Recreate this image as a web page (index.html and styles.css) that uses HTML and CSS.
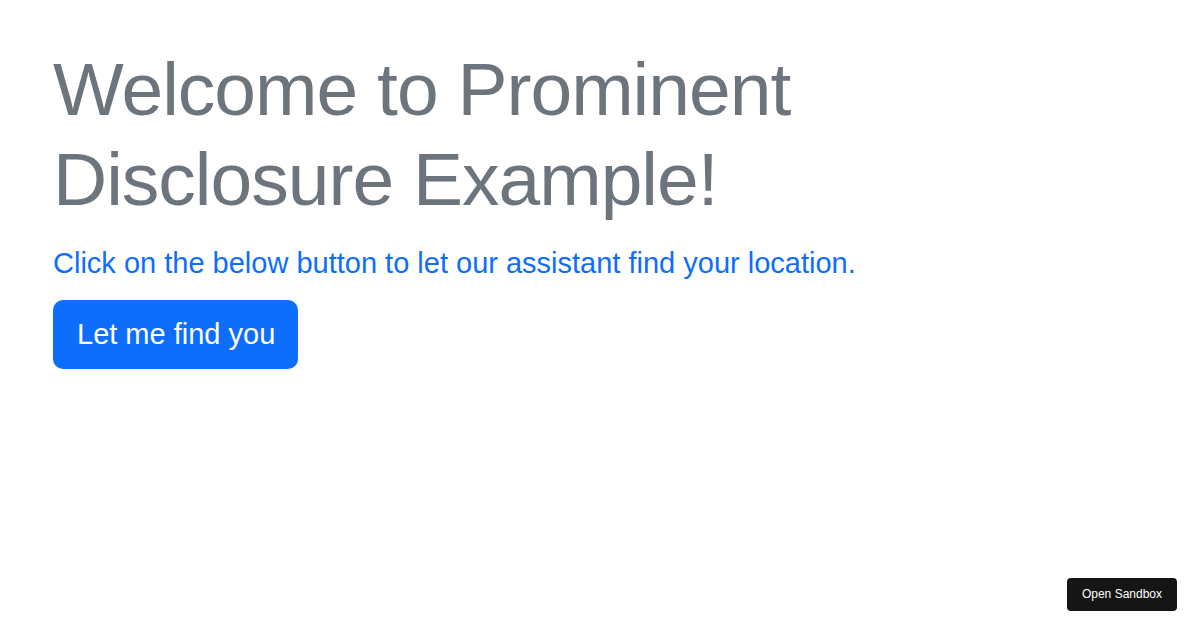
FILE: index.html
```html
<!DOCTYPE html>
<html lang="en">
<head>
    <meta charset="UTF-8">
    <meta name="viewport" content="width=device-width, initial-scale=1.0">
    <title>Prominent Disclosure Example</title>
    <link rel="stylesheet" href="styles.css">
</head>
<body>
    <main class="container">
        <h1 class="display">Welcome to Prominent Disclosure Example!</h1>
        <p class="lead">Click on the below button to let our assistant find your location.</p>
        <button class="btn-primary" id="findMe">Let me find you</button>
    </main>
    <a class="sandbox-link" href="#">Open Sandbox</a>
</body>
</html>
```

FILE: styles.css
```css
body {
    margin: 0;
    padding: 0;
    font-family: "Liberation Sans", Arial, sans-serif;
    background: #fff;
}
.container {
    padding: 44px 53px 0;
}
.display {
    max-width: 820px;
    margin: 0;
    font-size: 75px;
    font-weight: 300;
    line-height: 90px;
    letter-spacing: -1px;
    color: #6c757d;
}
.lead {
    margin: 21px 0 19px;
    font-size: 29px;
    line-height: 36px;
    color: #0d6efd;
    white-space: nowrap;
}
.btn-primary {
    display: inline-block;
    height: 69px;
    padding: 0 23px 0 24px;
    font-family: inherit;
    font-size: 29px;
    color: #fff;
    background-color: #0d6efd;
    border: none;
    border-radius: 10px;
    cursor: pointer;
}
.sandbox-link {
    position: fixed;
    right: 23px;
    bottom: 19px;
    padding: 9px 15px;
    font-size: 12px;
    line-height: 15px;
    color: #fff;
    background: #151515;
    border-radius: 4px;
    text-decoration: none;
}
```
